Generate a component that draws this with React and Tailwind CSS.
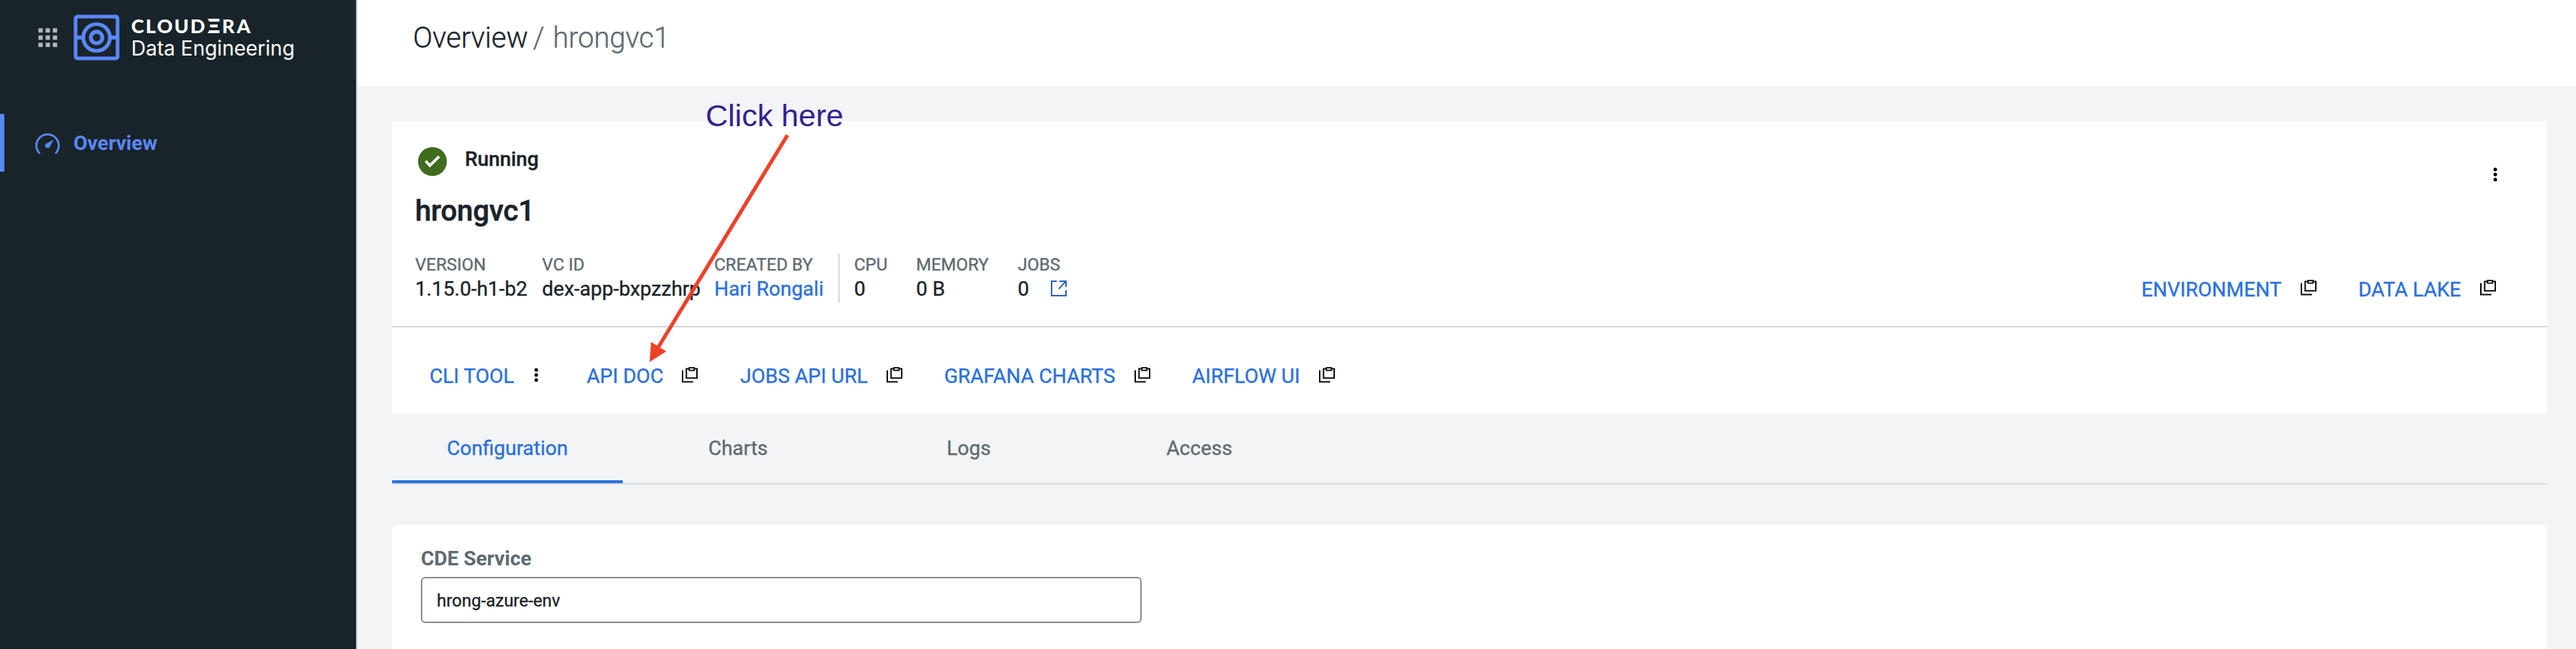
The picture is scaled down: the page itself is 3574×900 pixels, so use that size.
import React from "react";

function AppsGrid() {
  const cells = [0, 10, 20];
  return (
    <svg className="mt-[39px] h-[27px] w-[27px] shrink-0" viewBox="0 0 27 27" fill="#b3b6b9">
      {cells.map((y) => cells.map((x) => <rect key={`${x}-${y}`} x={x + 0.3} y={y + 0.2} width="6" height="6" />))}
    </svg>
  );
}

function ProductLogo() {
  return (
    <svg className="ml-[22px] mt-5 h-16 w-16 shrink-0" viewBox="0 0 64 64" fill="none" stroke="#5b87fb">
      <rect x="2.9" y="2.9" width="58.2" height="58.2" rx="2.6" strokeWidth="5" />
      <circle cx="32" cy="32" r="18.5" strokeWidth="5.2" />
      <circle cx="32" cy="32" r="8" strokeWidth="5.3" />
      <path d="M4 32H13.5M50.5 32H60" strokeWidth="5.4" />
    </svg>
  );
}

function GaugeIcon() {
  return (
    <svg className="mt-[26px] h-[36px] w-[36px] shrink-0" viewBox="0 0 36 36" fill="none">
      <path d="M7.2 29A15.5 15.5 0 1 1 28.8 29" stroke="#5b87fb" strokeWidth="2.8" />
      <circle cx="18" cy="18" r="3.3" fill="#5b87fb" />
      <path d="M26.6 9.6L16.6 15L21 19.4Z" fill="#5b87fb" />
    </svg>
  );
}

function CopyIcon({ className }) {
  return (
    <svg className={`h-[22px] w-[22px] shrink-0 ${className}`} viewBox="0 0 22 22" fill="none" stroke="#0b0b0b" strokeWidth="2">
      <path d="M1 4.6V20.6H15.7" />
      <rect x="6.3" y="2.4" width="14.7" height="12.9" />
      <rect x="10.2" y="1" width="7" height="3.6" fill="#fff" strokeWidth="1.8" />
    </svg>
  );
}

function ExternalIcon() {
  return (
    <svg className="mt-[6px] h-[22px] w-[22px] shrink-0" viewBox="0 0 22 22" fill="none" stroke="#2560cf" strokeWidth="2">
      <path d="M8.2 1H1V21H21V13.2" />
      <path d="M12 1H21V9M20.6 1.4L11 11.6" />
    </svg>
  );
}

function Kebab({ className }) {
  return (
    <svg className={`h-5 w-1.5 shrink-0 ${className}`} viewBox="0 0 6 20" fill="#050505">
      <circle cx="3" cy="3" r="2.5" />
      <circle cx="3" cy="10" r="2.5" />
      <circle cx="3" cy="17" r="2.5" />
    </svg>
  );
}

function Field({ label, width, children }) {
  return (
    <div className={`shrink-0 whitespace-nowrap ${width}`}>
      <div className="text-[24px] leading-8 text-[#5f6a71]">{label}</div>
      <div className="flex text-[28px] leading-9">{children}</div>
    </div>
  );
}

function Sidebar() {
  return (
    <aside className="h-full w-[496px] shrink-0 border-r-2 border-[#cfd0d1] bg-[#182429]">
      <div className="flex h-[158px] items-start pl-[53px]">
        <AppsGrid />
        <ProductLogo />
        <div className="ml-4 mt-[21px] text-white">
          <div className="flex h-[30px] font-['Lato',sans-serif] text-[27px] leading-[29px] font-black">
            <span className="w-[106px] tracking-[2.2px]">CLOUD</span>
            <svg className="mt-[5px] h-5 w-[17px] shrink-0" viewBox="0 0 17 20" fill="#fff">
              <path d="M0 0H16.5V4H2.5ZM3.5 8H14V12H3.5ZM2.5 16H16.5V20H0Z" />
            </svg>
            <span className="ml-[3px] tracking-[3px]">RA</span>
          </div>
          <div className="font-['Inter',sans-serif] text-[28px] leading-8">Data Engineering</div>
        </div>
      </div>
      <div className="flex h-20 items-start border-l-[6px] border-[#5b87fb] pl-[42px] text-[28px] font-bold text-[#5b87fb]">
        <GaugeIcon />
        <span className="ml-[18px] leading-[82px]">Overview</span>
      </div>
    </aside>
  );
}

function SummaryCard() {
  return (
    <section className="h-[406px] bg-white">
      <div className="flex h-[286px] justify-between border-b-2 border-[#d6d7db]">
        <div className="pl-8 pt-[33px]">
          <div className="flex h-[67px] items-start pl-1">
            <svg className="mt-[3px] h-10 w-10" viewBox="0 0 40 40" fill="none">
              <circle cx="20" cy="20" r="20" fill="#3f6c1e" />
              <path d="M10.6 19.2L16.4 25.6L29.4 12.8" stroke="#fff" strokeWidth="3.8" />
            </svg>
            <span className="ml-[25px] text-[28px] leading-10 font-medium tracking-[-0.1px]">Running</span>
          </div>
          <h1 className="h-[83px] text-[40px] leading-[49px] font-medium tracking-[-0.15px] [-webkit-text-stroke:0.6px]">
            hrongvc1
          </h1>
          <div className="flex">
            <Field label="VERSION" width="w-[176px]">1.15.0-h1-b2</Field>
            <Field label="VC ID" width="w-[239px]">dex-app-bxpzzhrp</Field>
            <Field label="CREATED BY" width="w-[172px]">
              <span className="text-[#2a70df]">Hari Rongali</span>
            </Field>
            <div className="mr-[20px] mt-px h-[68px] w-0.5 shrink-0 bg-[#d6d7db]" />
            <Field label="CPU" width="w-[86px]">0</Field>
            <Field label="MEMORY" width="w-[141px]">0 B</Field>
            <Field label="JOBS" width="w-[100px]">
              <span className="w-[46px]">0</span>
              <ExternalIcon />
            </Field>
          </div>
        </div>
        <div className="flex flex-col items-end justify-between pb-[32px] pr-[69px] pt-16">
          <Kebab className="" />
          <div className="flex items-start text-[28px] leading-9 text-[#2a70df]">
            <span className="w-[221px]">ENVIRONMENT</span>
            <CopyIcon className="mt-1" />
            <span className="ml-[58px] w-[169px]">DATA LAKE</span>
            <CopyIcon className="mr-[2px] mt-1" />
          </div>
        </div>
      </div>
      <div className="flex items-start whitespace-nowrap pl-[52px] pt-12 text-[28px] leading-10 text-[#2a70df]">
        <span className="w-[145px]">CLI TOOL</span>
        <Kebab className="mt-2" />
        <span className="ml-[67px] w-[132px]">API DOC</span>
        <CopyIcon className="mt-[7px]" />
        <span className="ml-[59px] w-[203px]">JOBS API URL</span>
        <CopyIcon className="mt-[7px]" />
        <span className="ml-[58px] w-[264px]">GRAFANA CHARTS</span>
        <CopyIcon className="mt-[7px]" />
        <span className="ml-[58px] w-[176px]">AIRFLOW UI</span>
        <CopyIcon className="mt-[7px]" />
      </div>
    </section>
  );
}

function Tabs() {
  return (
    <nav className="flex h-[98px] border-b-2 border-[#d5d7da] text-center text-[28px] leading-[96px] text-[#5f6a71]">
      <div className="w-80 border-b-4 border-[#2a70df] text-[#2a70df]">Configuration</div>
      <div className="w-80">Charts</div>
      <div className="w-80">Logs</div>
      <div className="w-80">Access</div>
    </nav>
  );
}

export default function App() {
  return (
    <div className="relative flex h-[900px] w-[3574px] overflow-hidden bg-[#f3f4f6] font-['Roboto',sans-serif] text-[#1b2329]">
      <Sidebar />
      <main className="flex-1 [-webkit-text-stroke:0.35px]">
        <header className="h-[120px] bg-white pl-[77px] pt-[33px] text-[40px] leading-10 font-light">
          Overview <span className="-ml-[3px] text-[#5f6a71]">/</span>{" "}
          <span className="ml-[2px] tracking-[-0.2px] text-[#5f6a71]">hrongvc1</span>
        </header>
        <div className="pl-12 pr-10 pt-12">
          <SummaryCard />
          <Tabs />
          <section className="mt-14 h-[200px] rounded-t-lg bg-white pl-10 pt-[27px]">
            <div className="h-[45px] text-[28px] leading-10 font-bold text-[#5f6a71] [-webkit-text-stroke:0px]">
              CDE Service
            </div>
            <div className="h-16 w-[1000px] rounded-md border-2 border-[#868d92] pl-5 text-[24px] leading-[62px]">
              hrong-azure-env
            </div>
          </section>
        </div>
      </main>
      <div className="absolute left-[979px] top-[136px] font-['Liberation_Sans',sans-serif] text-[43px] leading-[48px] text-[#35218f]">
        Click here
      </div>
      <svg className="absolute left-[890px] top-[180px] h-[330px] w-[220px]" viewBox="890 180 220 330" fill="none">
        <path d="M1092.5 187.5L913 482" stroke="#ee4128" strokeWidth="5.2" />
        <path d="M901.3 502L903.4 474.3L924.4 487.2Z" fill="#ee4128" />
      </svg>
    </div>
  );
}
